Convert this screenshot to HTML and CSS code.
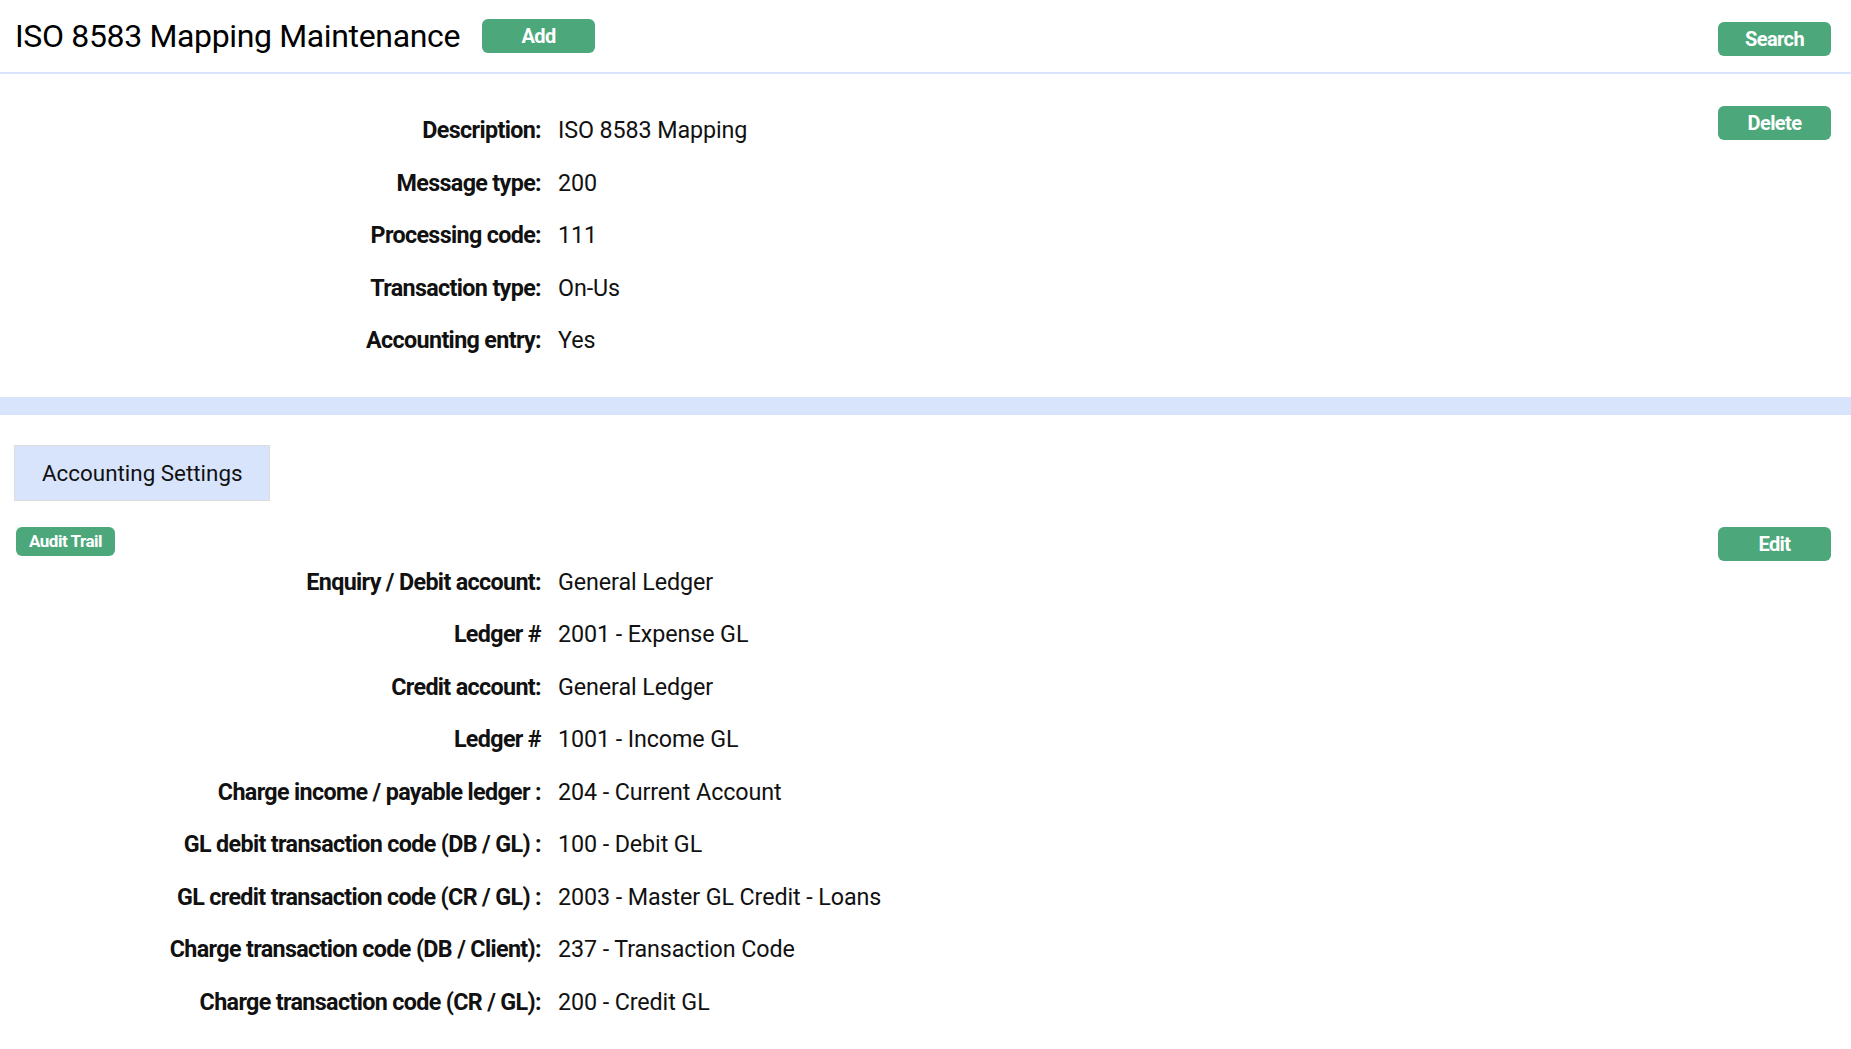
FILE: index.html
```html
<!DOCTYPE html>
<html lang="en">
<head>
    <meta charset="UTF-8">
    <meta name="viewport" content="width=device-width, initial-scale=1.0">
    <title>ISO 8583 Mapping Maintenance</title>
    <link rel="stylesheet" href="styles.css">
</head>
<body>
    <div class="header">
        <h1 class="title">ISO 8583 Mapping Maintenance</h1>
        <button class="btn btn-add">Add</button>
        <button class="btn btn-search">Search</button>
    </div>

    <div class="section">
        <div class="fields">
            <div class="field"><span class="label">Description:</span><span class="value">ISO 8583 Mapping</span></div>
            <div class="field"><span class="label">Message type:</span><span class="value">200</span></div>
            <div class="field"><span class="label">Processing code:</span><span class="value">111</span></div>
            <div class="field"><span class="label">Transaction type:</span><span class="value">On-Us</span></div>
            <div class="field"><span class="label">Accounting entry:</span><span class="value">Yes</span></div>
        </div>
        <div class="actions">
            <button class="btn">Delete</button>
        </div>
    </div>

    <div class="band"></div>

    <div class="tab">Accounting Settings</div>

    <div class="toolbar">
        <span class="badge">Audit Trail</span>
        <button class="btn">Edit</button>
    </div>

    <div class="fields">
        <div class="field"><span class="label">Enquiry / Debit account:</span><span class="value">General Ledger</span></div>
        <div class="field"><span class="label">Ledger #</span><span class="value">2001 - Expense GL</span></div>
        <div class="field"><span class="label">Credit account:</span><span class="value">General Ledger</span></div>
        <div class="field"><span class="label">Ledger #</span><span class="value">1001 - Income GL</span></div>
        <div class="field"><span class="label">Charge income / payable ledger :</span><span class="value">204 - Current Account</span></div>
        <div class="field"><span class="label">GL debit transaction code (DB / GL) :</span><span class="value">100 - Debit GL</span></div>
        <div class="field"><span class="label">GL credit transaction code (CR / GL) :</span><span class="value">2003 - Master GL Credit - Loans</span></div>
        <div class="field"><span class="label">Charge transaction code (DB / Client):</span><span class="value">237 - Transaction Code</span></div>
        <div class="field"><span class="label">Charge transaction code (CR / GL):</span><span class="value">200 - Credit GL</span></div>
    </div>
</body>
</html>
```

FILE: styles.css
```css
body {
    font-family: Roboto, 'Liberation Sans', sans-serif;
    margin: 0;
    background: #fff;
    color: #111;
}
.header {
    display: flex;
    align-items: center;
    height: 72px;
    padding: 0 20px 0 15px;
    border-bottom: 2px solid #d7e4fb;
}
.title {
    margin: 0;
    font-size: 32px;
    font-weight: 400;
    letter-spacing: -0.35px;
    color: #000;
}
.btn {
    width: 113px;
    height: 34px;
    border: none;
    border-radius: 6px;
    background: #4ca87b;
    color: #fff;
    font-family: inherit;
    font-size: 20px;
    font-weight: 700;
    letter-spacing: -0.6px;
    cursor: pointer;
}
.btn:hover { opacity: 0.85; }
.btn-add { margin-left: 22px; }
.btn-search {
    margin-left: auto;
    align-self: flex-start;
    margin-top: 22px;
}
.section {
    display: flex;
    padding-top: 30px;
}
.section .fields { flex: 1; }
.actions {
    padding: 2px 20px 0 0;
}
.field {
    display: grid;
    grid-template-columns: 541px 1fr;
    column-gap: 17px;
    align-items: center;
    height: 52.5px;
    font-size: 23.3px;
}
.label {
    text-align: right;
    font-weight: 700;
    letter-spacing: -0.65px;
}
.value {
    font-weight: 400;
    letter-spacing: -0.1px;
}
.band {
    height: 18px;
    margin-top: 30px;
    background: #d7e4fc;
}
.tab {
    display: inline-block;
    box-sizing: border-box;
    width: 256px;
    height: 56px;
    line-height: 54px;
    margin: 30px 0 0 14px;
    padding-left: 27px;
    background: #d7e4fc;
    border: 1px solid #dcdcdc;
    font-size: 22.4px;
}
.toolbar {
    display: flex;
    justify-content: space-between;
    align-items: flex-start;
    height: 29px;
    margin-top: 26px;
    padding: 0 20px 0 16px;
}
.badge {
    display: inline-block;
    width: 99px;
    height: 29px;
    line-height: 29px;
    text-align: center;
    border-radius: 6px;
    background: #4ca87b;
    color: #fff;
    font-size: 17px;
    font-weight: 700;
    letter-spacing: -0.5px;
}
```
